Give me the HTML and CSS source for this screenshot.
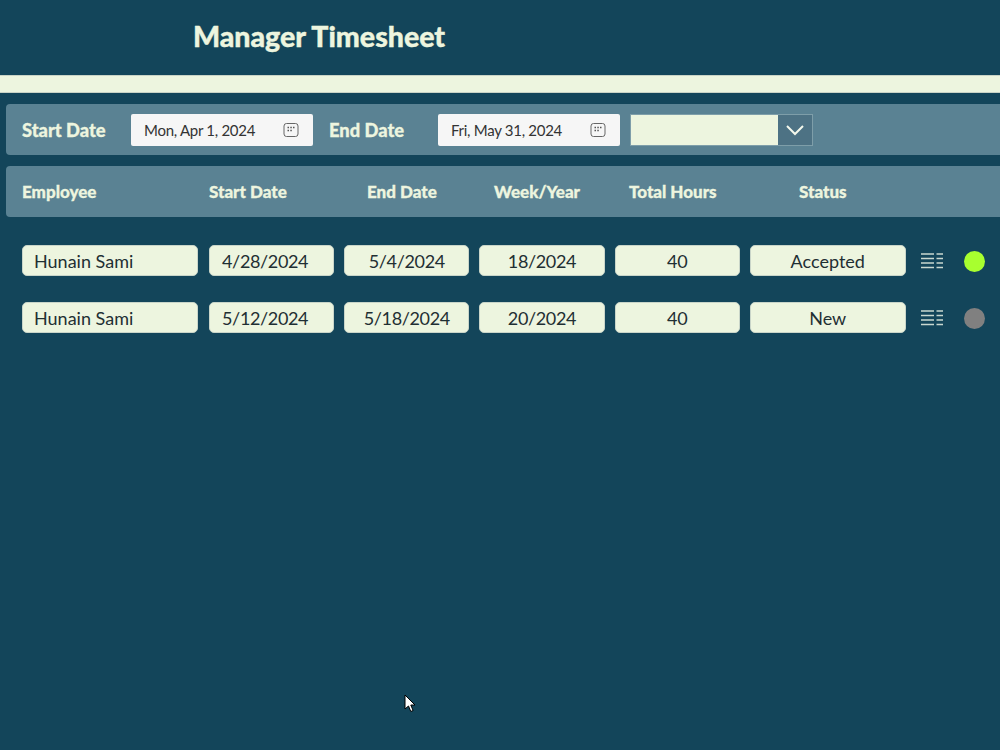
FILE: index.html
```html
<!DOCTYPE html>
<html lang="en">
<head>
<meta charset="utf-8">
<title>Manager Timesheet</title>
<link rel="stylesheet" href="styles.css">
</head>
<body>
<header class="top"><h1 class="title">Manager Timesheet</h1></header>
<div class="strip"></div>
<section class="panel filters">
  <span class="label label-start">Start Date</span>
  <div class="date"><span>Mon, Apr 1, 2024</span>
    <svg class="cal" viewBox="0 0 16 16" width="16" height="16"><rect x="1" y="1.500" width="14" height="13" rx="2.500" fill="none" stroke="#666" stroke-width="1"/><path d="M4.500 5.500h1.500M7.300 5.500h1.500M10 5.500h1.500M4.500 8.500h1.500M7.300 8.500h1.500" stroke="#555" stroke-width="1.400"/></svg>
  </div>
  <span class="label label-end">End Date</span>
  <div class="date"><span>Fri, May 31, 2024</span>
    <svg class="cal" viewBox="0 0 16 16" width="16" height="16"><rect x="1" y="1.500" width="14" height="13" rx="2.500" fill="none" stroke="#666" stroke-width="1"/><path d="M4.500 5.500h1.500M7.300 5.500h1.500M10 5.500h1.500M4.500 8.500h1.500M7.300 8.500h1.500" stroke="#555" stroke-width="1.400"/></svg>
  </div>
  <div class="combo"><div class="combo-field"></div>
    <div class="combo-btn"><svg viewBox="0 0 20 12" width="20" height="12"><path d="M2 2l8 8 8-8" fill="none" stroke="#f4f8ec" stroke-width="2"/></svg></div>
  </div>
</section>
<section class="panel heads">
  <span class="label">Employee</span>
  <span class="label">Start Date</span>
  <span class="label">End Date</span>
  <span class="label">Week/Year</span>
  <span class="label">Total Hours</span>
  <span class="label">Status</span>
</section>
<main class="rows">
  <div class="row">
    <div class="cell left name">Hunain Sami</div>
    <div class="cell left num">4/28/2024</div>
    <div class="cell num">5/4/2024</div>
    <div class="cell num">18/2024</div>
    <div class="cell num">40</div>
    <div class="cell">Accepted</div>
    <svg class="list" viewBox="0 0 22 16" width="22" height="16"><path d="M0 1h13M15.500 1h6.500M0 5.500h13M15.500 5.500h6.500M0 10h13M15.500 10h6.500M0 14.500h13M15.500 14.500h6.500" stroke="#c9d8d0" stroke-width="1.400"/></svg>
    <span class="dot green"></span>
  </div>
  <div class="row">
    <div class="cell left name">Hunain Sami</div>
    <div class="cell left num">5/12/2024</div>
    <div class="cell num">5/18/2024</div>
    <div class="cell num">20/2024</div>
    <div class="cell num">40</div>
    <div class="cell">New</div>
    <svg class="list" viewBox="0 0 22 16" width="22" height="16"><path d="M0 1h13M15.500 1h6.500M0 5.500h13M15.500 5.500h6.500M0 10h13M15.500 10h6.500M0 14.500h13M15.500 14.500h6.500" stroke="#c9d8d0" stroke-width="1.400"/></svg>
    <span class="dot grey"></span>
  </div>
</main>
<svg class="cursor" viewBox="0 0 12 19" width="12" height="19"><path d="M1 1v14l3.500-3 2.300 5.500 2.300-1L6.800 11H11z" fill="#fff" stroke="#000" stroke-width="1"/></svg>
</body>
</html>
```
FILE: styles.css
```css
* { box-sizing: border-box; }
html, body { margin: 0; height: 100%; overflow: hidden; }
body {
  position: relative;
  background: #13455a;
  font-family: Lato, "Liberation Sans", sans-serif;
  color: #1f2f33;
}
.top { height: 72px; padding-left: 193px; display: flex; align-items: center; margin-bottom: 3px; }
.title { margin: 0; font-size: 28.500px; font-weight: 900; color: #edf5df; -webkit-text-stroke: 0.4px #edf5df; }
.strip { height: 18px; background: #edf5df; border-top: 1px solid #c9d3c6; border-bottom: 1px solid #c9d3c6; }
.panel {
  margin-left: 6px;
  height: 51px;
  background: #5a8293;
  border-radius: 4px 0 0 4px;
  padding-left: 16px;
  align-items: center;
}
.label { font-size: 17px; font-weight: 900; color: #edf5df; white-space: nowrap; -webkit-text-stroke: 0.3px #edf5df; }
.filters { margin-top: 11px; display: flex; }
.filters .label { font-size: 18.300px; }
.label-start { width: 109px; }
.label-end { width: 109px; margin-left: 16px; }
.date {
  width: 182px;
  height: 32px;
  background: #f6f6f6;
  border-radius: 2px;
  padding: 0 14px 0 13px;
  display: flex;
  align-items: center;
  justify-content: space-between;
  font-size: 15px;
  letter-spacing: -0.280px;
  color: #333;
}
.combo { margin-left: 10px; width: 183px; height: 32px; display: flex; border: 1px solid #7e9ea9; }
.combo-field { flex: 1; background: #edf5df; }
.combo-btn { width: 34px; background: #4d7284; display: flex; align-items: center; justify-content: center; }
.heads {
  margin-top: 11px;
  display: grid;
  grid-template-columns: 187px 158px 127px 135px 170px 1fr;
}
.rows { padding: 28px 0 0 22px; display: flex; flex-direction: column; gap: 26px; }
.row {
  height: 31px;
  display: grid;
  grid-template-columns: 177px repeat(4, 125.200px) 156px 27px 32px;
  column-gap: 10px;
  align-items: center;
}
.cell {
  height: 31px;
  background: #edf5df;
  border: 1px solid #c9d5c9;
  border-radius: 5px;
  display: flex;
  align-items: center;
  justify-content: center;
  font-size: 18px;
  color: #1f2f33;
}
.num { letter-spacing: -0.350px; }
.left { justify-content: flex-start; padding-left: 12px; }
.name { padding-left: 11px; margin-right: 1px; }
.list { margin-left: 5px; }
.dot { width: 21px; height: 21px; border-radius: 50%; margin: 1px 0 0 11px; }
.green { background: #a8ff2f; }
.grey { background: #808080; }
.cursor { position: absolute; left: 404px; top: 694px; }
```
